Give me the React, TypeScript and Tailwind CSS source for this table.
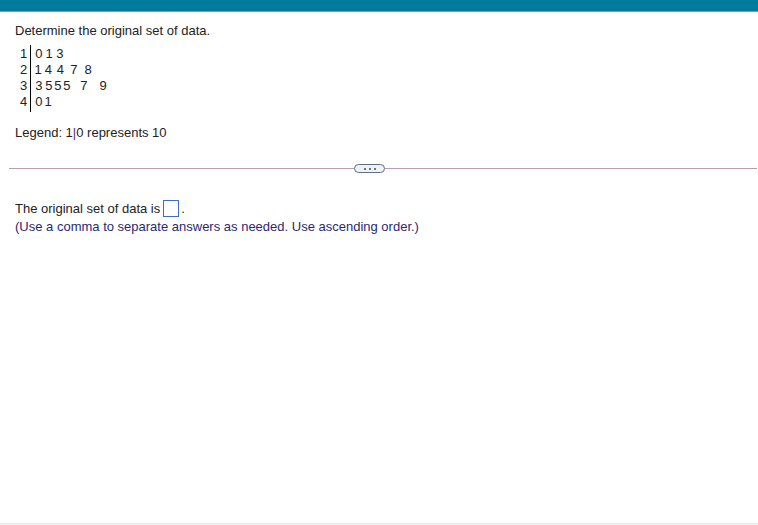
const font = { fontFamily: '"Liberation Sans", Arial, sans-serif' };

// Stem-and-leaf rows; leaf spacing follows the rendered source, not even spaces
const StemLeaf = () => (
  <div className="mt-[6px] ml-[5px] flex text-[13px] leading-[16px] text-[#222222]">
    <div className="flex flex-col pt-[1px] pb-[2px] text-right">
      <span>1</span>
      <span>2</span>
      <span>3</span>
      <span>4</span>
    </div>
    <div className="ml-[3px] flex flex-col border-l border-black pt-[1px] pb-[2px] pl-[4px]">
      <div className="flex">
        <span>0</span>
        <span className="ml-[3px]">1</span>
        <span className="ml-[3.6px]">3</span>
      </div>
      <div className="flex">
        <span className="-ml-[0.8px]">1</span>
        <span className="ml-[3px]">4</span>
        <span className="ml-[4.8px]">4</span>
        <span className="ml-[6.3px]">7</span>
        <span className="ml-[7px]">8</span>
      </div>
      <div className="flex">
        <span>3</span>
        <span className="ml-[2.8px]">5</span>
        <span className="ml-[1.8px]">5</span>
        <span className="ml-[1.8px]">5</span>
        <span className="ml-[9.7px]">7</span>
        <span className="ml-[11.9px]">9</span>
      </div>
      <div className="flex">
        <span>0</span>
        <span className="ml-[2px]">1</span>
      </div>
    </div>
  </div>
);

export default function App() {
  return (
    <div className="flex h-screen flex-col bg-white" style={font}>
      {/* Top bar */}
      <div className="h-[12px] bg-[#007b9b] border-b border-[#5fa9bd]" />

      <div className="flex-1">
        {/* Question */}
        <div className="pl-[15px]">
          <p className="mt-[11px] text-[13px] leading-[16px] text-[#222222]">
            Determine the original set of data.
          </p>
          <StemLeaf />
          <p className="mt-[13px] text-[13px] leading-[16px] text-[#222222]">
            Legend: 1<span className="text-[#5a2a6e]">|</span>0 represents 10
          </p>
        </div>

        {/* Divider with expand pill */}
        <div className="mt-[23px] flex h-[9px] items-center pl-[9px] pr-[1px]">
          <div className="h-px w-[345px] bg-[#bf9bab]" />
          <button className="flex h-[9px] w-[31px] items-center justify-center gap-[3px] rounded-full border border-[#5f6f80] bg-[#eef1f5]">
            <span className="h-[2px] w-[2px] rounded-full bg-[#4a4a4a]" />
            <span className="h-[2px] w-[2px] rounded-full bg-[#4a4a4a]" />
            <span className="h-[2px] w-[2px] rounded-full bg-[#4a4a4a]" />
          </button>
          <div className="h-px flex-1 bg-[#bf9bab]" />
        </div>

        {/* Answer */}
        <div className="mt-[27px] pl-[15px] text-[13px] leading-[16px]">
          <div className="flex h-[17px] items-center text-[#222222]">
            <span>The original set of data is</span>
            <span className="ml-[3px] h-[17px] w-[16px] border border-[#3a6fc8] bg-white" />
            <span className="ml-[2px]">.</span>
          </div>
          <p className="mt-[2px] text-[#2b2870]">
            (Use a comma to separate answers as needed. Use ascending order.)
          </p>
        </div>
      </div>

      {/* Bottom band */}
      <div className="h-[2px] bg-[#eeeeee]" />
    </div>
  );
}
